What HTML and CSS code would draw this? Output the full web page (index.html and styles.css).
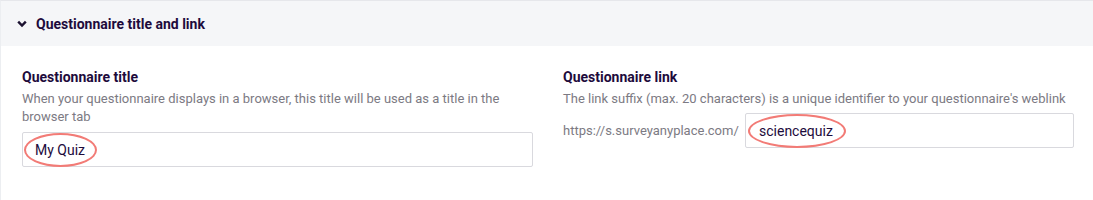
FILE: index.html
```html
<!DOCTYPE html>
<html>
<head>
<meta charset="utf-8">
<link rel="stylesheet" href="styles.css">
</head>
<body>
<div class="panel">
  <div class="panel-head">
    <svg class="chev" width="10" height="8" viewBox="0 0 10 8"><path d="M1.2 1.6 L5 5.6 L8.8 1.6" fill="none" stroke="#1b1130" stroke-width="2.4"/></svg>
    <span class="panel-title">Questionnaire title and link</span>
  </div>
  <div class="panel-body">
    <div class="field">
      <div class="label">Questionnaire title</div>
      <div class="desc">When your questionnaire displays in a browser, this title will be used as a title in the browser tab</div>
      <div class="input"><span class="mark mark-a">My Quiz</span></div>
    </div>
    <div class="field">
      <div class="label">Questionnaire link</div>
      <div class="desc">The link suffix (max. 20 characters) is a unique identifier to your questionnaire's weblink</div>
      <div class="link-row">
        <span class="prefix">https://s.surveyanyplace.com/</span>
        <div class="input input-link"><span class="mark mark-b">sciencequiz</span></div>
      </div>
    </div>
  </div>
</div>
</body>
</html>
```
FILE: styles.css
```css
* { box-sizing: border-box; }
html, body { margin: 0; padding: 0; background: #fff; }
body { font-family: Roboto, "Liberation Sans", sans-serif; width: 1093px; height: 200px; overflow: hidden; }
.panel { border-top: 1px solid #e6e7eb; border-left: 1px solid #eceef1; height: 200px; }
.panel-head {
  height: 45px; background: #f5f6f8; display: flex; align-items: center;
  padding-left: 16px; gap: 9px;
}
.chev { display: block; margin-top: 1px; }
.panel-title { font-size: 14px; font-weight: 700; color: #1d0b3c; }
.panel-body {
  display: grid; grid-template-columns: 511px 511px; column-gap: 30px;
  padding: 22px 0 0 21px;
}
.label { font-size: 14px; font-weight: 700; color: #1d0b3c; line-height: 18px; }
.desc { font-size: 13px; color: #7c7a83; line-height: 18px; margin-top: 4px; }
.input {
  height: 35px; border: 1px solid #d9d9de; border-radius: 2px; margin-top: 6px;
  display: flex; align-items: center; padding-left: 12px;
  font-size: 14px; color: #1d0b3c;
}
.link-row { display: flex; align-items: center; margin-top: 5px; }
.prefix { font-size: 13px; color: #7c7a83; width: 182px; flex: none; }
.input-link { flex: 1; margin-top: 0; padding-left: 13px; }
.mark { position: relative; }
.mark::after {
  content: ""; position: absolute; border: 2px solid #f27b76; border-radius: 50%;
}
.mark-a::after { left: -11px; right: -12px; top: -9px; bottom: -9px; }
.mark-b::after { left: -11px; right: -13px; top: -9px; bottom: -9px; }
```
